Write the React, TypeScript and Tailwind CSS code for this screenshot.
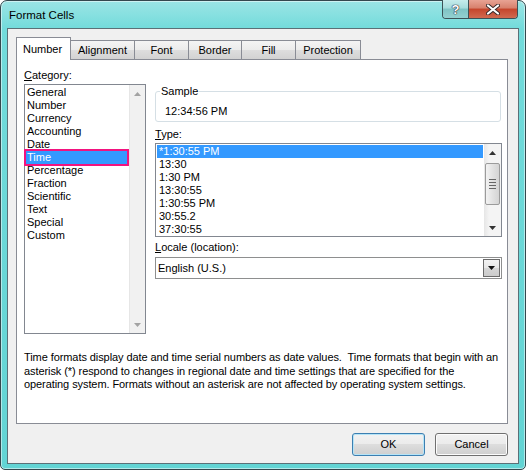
import React from "react";

const categories = ["General", "Number", "Currency", "Accounting", "Date", "Time", "Percentage", "Fraction", "Scientific", "Text", "Special", "Custom"];
const types = ["*1:30:55 PM", "13:30", "1:30 PM", "13:30:55", "1:30:55 PM", "30:55.2", "37:30:55"];
const tabs = [
  { label: "Alignment", w: "w-[65px]" },
  { label: "Font", w: "w-[55px]" },
  { label: "Border", w: "w-[54px]" },
  { label: "Fill", w: "w-[55px]" },
  { label: "Protection", w: "w-[66px]" },
];

// little scroll arrows
function Arrow({ up, color }: { up?: boolean; color: string }) {
  return (
    <svg width="7" height="4" viewBox="0 0 7 4">
      <path d={up ? "M3.5 0L7 4H0Z" : "M0 0H7L3.5 4Z"} fill={color} />
    </svg>
  );
}

export default function App() {
  return (
    <div className="w-[528px] h-[474px] bg-white font-['Liberation_Sans',Arial,sans-serif] text-[11px] leading-[13px] text-black">
      {/* window frame */}
      <div className="w-[526px] h-[470px] flex flex-col rounded-t-[7px] rounded-b-[5px] border border-[#34484e] bg-[linear-gradient(to_bottom,#9be5e5_0%,#72dbdb_6%,#62d4d4_100%)] px-[6px] pb-[5px] shadow-[inset_0_0_0_1px_rgba(255,255,255,0.5)]">
        {/* title bar */}
        <div className="h-[27px] shrink-0 flex items-start justify-between">
          <span className="mt-[8px] ml-[2px] text-[11.5px]">Format Cells</span>
          <div className="flex -mt-px mr-[1px] h-[19px] rounded-b-[4px] border border-t-0 border-[#3c5257] overflow-hidden">
            <div className="w-[26px] flex items-center justify-center border-r border-[#3c5257] bg-[linear-gradient(to_bottom,#c6ecec_0%,#a6dcdc_45%,#7fc3c4_50%,#93d1d1_100%)] text-white font-bold text-[13px] [text-shadow:0_0_1px_#223,0_0_1px_#223,0_0_1px_#223]">
              ?
            </div>
            <div className="w-[48px] flex items-center justify-center bg-[linear-gradient(to_bottom,#e8a394_0%,#d7806c_45%,#c5452c_50%,#d06a50_100%)]">
              <svg width="14" height="11" viewBox="0 0 14 11">
                <path d="M2 1.5L12 9.5M12 1.5L2 9.5" stroke="#3a2a2a" strokeWidth="4" strokeLinecap="round" />
                <path d="M2 1.5L12 9.5M12 1.5L2 9.5" stroke="#fff" strokeWidth="2.2" strokeLinecap="round" />
              </svg>
            </div>
          </div>
        </div>

        {/* client area */}
        <div className="flex-1 flex flex-col border border-[#5b7077] bg-[#f0f0f0] pl-[8px] pr-[10px] pt-[8px]">
          {/* tabs */}
          <div className="flex items-end h-[22px]">
            <div className="relative z-10 h-[23px] w-[55px] -mb-px bg-white border border-b-0 border-[#898c95] pl-[6px] pt-[5px]">
              Number
            </div>
            {tabs.map((t) => (
              <div
                key={t.label}
                className={`${t.w} h-[19px] -ml-px flex justify-center pt-[3px] border border-b-0 border-[#898c95] bg-[linear-gradient(to_bottom,#f4f4f4_0%,#ebebeb_50%,#dedede_50%,#d2d2d2_100%)]`}
              >
                {t.label}
              </div>
            ))}
          </div>

          {/* tab page */}
          <div className="h-[365px] flex flex-col border border-[#898c95] bg-white pl-[7px] pt-[8px]">
            <div className="flex gap-[9px]">
              {/* category column */}
              <div className="w-[122px] flex flex-col">
                <div className="leading-[15px] mb-px">
                  <span className="underline">C</span>ategory:
                </div>
                <div className="h-[250px] flex border border-[#828790]">
                  <div className="flex-1 pt-px">
                    {categories.map((c) =>
                      c === "Time" ? (
                        <div key={c} className="relative h-[13px] ml-px mr-[2px] pl-px bg-[#3399ff] text-white">
                          {c}
                          <span className="absolute -inset-[2px] border-2 border-[#f2137f]" />
                        </div>
                      ) : (
                        <div key={c} className="h-[13px] pl-[2px]">
                          {c}
                        </div>
                      )
                    )}
                  </div>
                  <div className="w-[16px] flex flex-col justify-between bg-[#f1f1f1] border-l border-[#e6e6e6]">
                    <div className="h-[17px] flex items-center justify-center">
                      <Arrow up color="#a3a3a3" />
                    </div>
                    <div className="h-[17px] flex items-center justify-center">
                      <Arrow color="#a3a3a3" />
                    </div>
                  </div>
                </div>
              </div>

              {/* right column */}
              <div className="w-[347px] flex flex-col">
                <fieldset className="mt-[16px] w-[346px] rounded-[3px] border border-[#d5dfe5] pl-[9px] pt-[5px] pb-[2px]">
                  <legend className="-ml-[5px] px-px leading-[15px]">Sample</legend>
                  <div className="leading-[15px]">12:34:56 PM</div>
                </fieldset>

                <div className="mt-[5px] leading-[15px]">
                  <span className="underline">T</span>ype:
                </div>
                <div className="mt-px h-[94px] flex border border-[#828790]">
                  <div className="flex-1 pt-px">
                    {types.map((t, i) =>
                      i === 0 ? (
                        <div key={t} className="h-[13px] mx-px pl-[2px] bg-[#3399ff] text-white">
                          {t}
                        </div>
                      ) : (
                        <div key={t} className="h-[13px] pl-[3px]">
                          {t}
                        </div>
                      )
                    )}
                  </div>
                  <div className="w-[17px] flex flex-col bg-[linear-gradient(to_right,#e6e6e6,#f4f4f4_30%,#f4f4f4)]">
                    <div className="h-[17px] flex items-center justify-center">
                      <Arrow up color="#333" />
                    </div>
                    <div className="mt-[2px] mx-px h-[42px] rounded-[2px] border border-[#9b9b9b] bg-[linear-gradient(to_right,#f3f3f3,#e2e2e2_50%,#d4d4d4)] flex flex-col items-center justify-center gap-[2px]">
                      <div className="w-[7px] h-px bg-[#666]" />
                      <div className="w-[7px] h-px bg-[#666]" />
                      <div className="w-[7px] h-px bg-[#666]" />
                      <div className="w-[7px] h-px bg-[#666]" />
                    </div>
                    <div className="flex-1" />
                    <div className="h-[17px] flex items-center justify-center">
                      <Arrow color="#333" />
                    </div>
                  </div>
                </div>

                <div className="mt-[3px] leading-[15px]">
                  <span className="underline">L</span>ocale (location):
                </div>
                <div className="mt-[2px] h-[22px] flex items-center justify-between border border-[#8e8f8f] pl-[2px]">
                  <span>English (U.S.)</span>
                  <div className="mr-px w-[17px] h-[18px] flex items-center justify-center border border-[#6b6b6b] bg-[linear-gradient(to_bottom,#f2f2f2,#e6e6e6_50%,#d6d6d6_50%,#cbcbcb)]">
                    <Arrow color="#111" />
                  </div>
                </div>
              </div>
            </div>

            {/* description */}
            <div className="mt-[17px] leading-[13.5px] tracking-[-0.08px] whitespace-pre">
              <div>Time formats display date and time serial numbers as date values.  Time formats that begin with an</div>
              <div>asterisk (*) respond to changes in regional date and time settings that are specified for the</div>
              <div>operating system. Formats without an asterisk are not affected by operating system settings.</div>
            </div>
          </div>

          {/* buttons */}
          <div className="mt-[9px] flex justify-end gap-[10px]">
            <button className="w-[73px] h-[23px] rounded-[3px] border border-[#3c7fb1] shadow-[inset_0_0_0_1px_#b6e4f7] bg-[linear-gradient(to_bottom,#f2f2f2,#ebebeb_50%,#dddddd_50%,#cfcfcf)]">
              OK
            </button>
            <button className="w-[73px] h-[23px] rounded-[3px] border border-[#707070] shadow-[inset_0_0_0_1px_#fcfcfc] bg-[linear-gradient(to_bottom,#f2f2f2,#ebebeb_50%,#dddddd_50%,#cfcfcf)]">
              Cancel
            </button>
          </div>
        </div>
      </div>
    </div>
  );
}
